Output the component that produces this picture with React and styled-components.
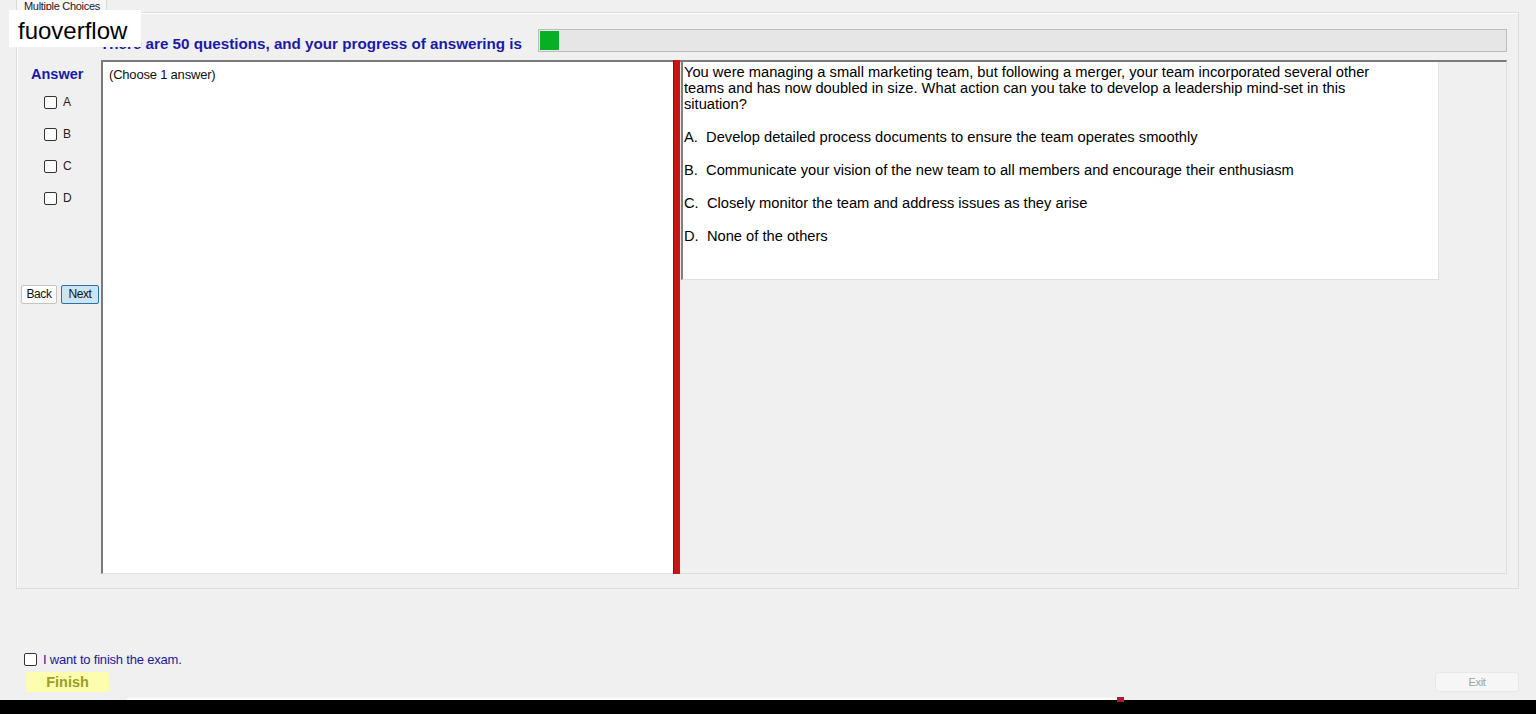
import styled, { createGlobalStyle } from "styled-components";

const GlobalStyle = createGlobalStyle`
  html, body {
    margin: 0;
    padding: 0;
    background: #f0f0f0;
    font-family: "Liberation Sans", Arial, sans-serif;
    overflow: hidden;
  }
`;

const OPTIONS = [
  "Develop detailed process documents to ensure the team operates smoothly",
  "Communicate your vision of the new team to all members and encourage their enthusiasm",
  "Closely monitor the team and address issues as they arise",
  "None of the others",
];

export default function App() {
  return (
    <>
      <GlobalStyle />
      <Page>
        <Watermark>fuoverflow</Watermark>
        <TabStrip>
          <Tab>Multiple Choices</Tab>
        </TabStrip>
        <TabPanel>
          <HeaderRow>
            <Title>There are 50 questions, and your progress of answering is</Title>
            <Progress>
              <ProgressFill style={{ width: `${(1 / 50) * 100}%` }} />
            </Progress>
          </HeaderRow>
          <Body>
            <Sidebar>
              <AnswerLabel>Answer</AnswerLabel>
              <Choices>
                {["A", "B", "C", "D"].map((l) => (
                  <Choice key={l}>
                    <Box />
                    <span>{l}</span>
                  </Choice>
                ))}
              </Choices>
              <NavRow>
                <NavButton>Back</NavButton>
                <NavButton $primary>Next</NavButton>
              </NavRow>
            </Sidebar>
            <AnswerBox>(Choose 1 answer)</AnswerBox>
            <Splitter />
            <QuestionArea>
              <QuestionBox>
                <QuestionText>
                  You were managing a small marketing team, but following a merger, your team
                  incorporated several other teams and has now doubled in size. What action can
                  you take to develop a leadership mind-set in this situation?
                </QuestionText>
                {OPTIONS.map((o, i) => (
                  <Option key={i}>
                    {"ABCD"[i]}.{"\u00a0\u00a0"}
                    {o}
                  </Option>
                ))}
              </QuestionBox>
            </QuestionArea>
          </Body>
        </TabPanel>
        <Footer>
          <FinishCheck>
            <Box />
            <span>I want to finish the exam.</span>
          </FinishCheck>
          <FooterRow>
            <FinishButton>Finish</FinishButton>
            <ExitButton>Exit</ExitButton>
          </FooterRow>
        </Footer>
        <VideoBar>
          <Track />
          <Thumb />
        </VideoBar>
      </Page>
    </>
  );
}

const Page = styled.div`
  position: relative;
  width: 1536px;
  height: 714px;
  display: flex;
  flex-direction: column;
  overflow: hidden;
`;

const Watermark = styled.div`
  position: absolute;
  left: 9px;
  top: 10px;
  width: 132px;
  height: 37px;
  background: #fff;
  font-size: 24px;
  color: #000;
  padding-left: 9px;
  box-sizing: border-box;
  line-height: 42px;
  z-index: 2;
`;

const TabStrip = styled.div`
  height: 12px;
  display: flex;
  padding-left: 16px;
`;

const Tab = styled.div`
  width: 91px;
  height: 12px;
  box-sizing: border-box;
  border: 1px solid #d9d9d9;
  border-bottom: none;
  background: #f7f7f7;
  font-size: 11px;
  letter-spacing: -0.3px;
  color: #222;
  line-height: 13px;
  padding-left: 7px;
  overflow: hidden;
  margin-top: -1px;
`;

const TabPanel = styled.div`
  margin: 0 17px 0 16px;
  height: 577px;
  box-sizing: border-box;
  border: 1px solid #dcdcdc;
  box-shadow: inset 1px 1px 0 #fff;
  display: flex;
  flex-direction: column;
`;

const HeaderRow = styled.div`
  height: 47px;
  display: flex;
  align-items: flex-start;
  padding-left: 83px;
  padding-top: 16px;
  box-sizing: border-box;
`;

const Title = styled.div`
  font-size: 15.2px;
  font-weight: bold;
  color: #1a1aa6;
  margin-top: 6px;
  width: 438px;
  white-space: nowrap;
`;

const Progress = styled.div`
  width: 969px;
  height: 23px;
  box-sizing: border-box;
  border: 1px solid #bcbcbc;
  background: #e6e6e6;
  padding: 1px;
  display: flex;
`;

const ProgressFill = styled.div`
  background: #06b025;
  height: 100%;
`;

const Body = styled.div`
  display: flex;
  height: 514px;
  padding-right: 11px;
`;

const Sidebar = styled.div`
  width: 84px;
  display: flex;
  flex-direction: column;
`;

const AnswerLabel = styled.div`
  font-size: 14.5px;
  font-weight: bold;
  color: #1a1aa6;
  margin: 6px 0 0 14px;
  height: 17px;
`;

const Choices = styled.div`
  display: flex;
  flex-direction: column;
  margin: 3px 0 0 27px;
`;

const Choice = styled.label`
  display: flex;
  align-items: center;
  gap: 6px;
  font-size: 12px;
  color: #222;
  height: 32px;
`;

const Box = styled.span`
  width: 11px;
  height: 11px;
  border: 1px solid #333;
  border-radius: 2px;
  background: #fff;
  flex-shrink: 0;
`;

const NavRow = styled.div`
  display: flex;
  gap: 4px;
  margin: 71px 0 0 4px;
`;

const NavButton = styled.div`
  height: 19px;
  box-sizing: border-box;
  padding: 0 4px;
  width: ${(p) => (p.$primary ? "38px" : "36px")};
  border: 1px solid ${(p) => (p.$primary ? "#2f6fa8" : "#c4c4c4")};
  background: ${(p) => (p.$primary ? "#cce4f7" : "#fdfdfd")};
  border-radius: 2px;
  font-size: 12px;
  letter-spacing: -0.4px;
  line-height: 17px;
  text-align: center;
  color: #111;
`;

const AnswerBox = styled.div`
  width: 572px;
  box-sizing: border-box;
  background: #fff;
  border-top: 2px solid #7a7a7a;
  border-left: 2px solid #7a7a7a;
  border-bottom: 1px solid #e3e3e3;
  font-size: 13px;
  color: #111;
  padding: 5px 6px;
  letter-spacing: -0.2px;
`;

const Splitter = styled.div`
  width: 7px;
  background: #c91414;
  border-left: 1px solid #8a1010;
  box-sizing: border-box;
`;

const QuestionArea = styled.div`
  flex: 1;
  box-sizing: border-box;
  border-top: 2px solid #7a7a7a;
  border-right: 1px solid #dcdcdc;
  border-bottom: 1px solid #dcdcdc;
  padding-left: 1px;
`;

const QuestionBox = styled.div`
  width: 758px;
  height: 218px;
  box-sizing: border-box;
  background: #fff;
  border-left: 2px solid #7f7f7f;
  border-right: 1px solid #e0e0e0;
  border-bottom: 1px solid #e0e0e0;
  padding: 2px 0 0 1px;
  font-size: 14.7px;
  color: #000;
  line-height: 16px;
`;

const QuestionText = styled.div`
  width: 700px;
  margin-bottom: 17px;
`;

const Option = styled.div`
  margin-bottom: 17px;
  white-space: pre;
`;

const Footer = styled.div`
  margin-top: 63px;
  display: flex;
  flex-direction: column;
`;

const FinishCheck = styled.div`
  display: flex;
  align-items: center;
  gap: 6px;
  margin-left: 24px;
  height: 14px;
  font-size: 13px;
  color: #1a1a9a;
  letter-spacing: -0.2px;
`;

const FooterRow = styled.div`
  display: flex;
  justify-content: space-between;
  margin: 6px 17px 0 26px;
`;

const FinishButton = styled.div`
  width: 83px;
  height: 20px;
  background: #fdfdb0;
  border-radius: 2px;
  font-size: 14.5px;
  font-weight: bold;
  color: #9c9c28;
  text-align: center;
  line-height: 21px;
`;

const ExitButton = styled.div`
  width: 84px;
  height: 20px;
  box-sizing: border-box;
  border: 1px solid #e8e8e8;
  border-radius: 3px;
  background: #f6f6f6;
  font-size: 11px;
  color: #a0a0a0;
  text-align: center;
  line-height: 18px;
  letter-spacing: -0.3px;
`;

const VideoBar = styled.div`
  position: absolute;
  left: 0;
  right: 0;
  bottom: 0;
  height: 17px;
`;

const Track = styled.div`
  position: absolute;
  left: 0;
  right: 0;
  bottom: 0;
  height: 14px;
  background: #000;
  &::before {
    content: "";
    position: absolute;
    left: 127px;
    width: 990px;
    top: -2px;
    height: 2px;
    background: #fff;
  }
`;

const Thumb = styled.div`
  position: absolute;
  left: 1117px;
  top: 0;
  width: 7px;
  height: 5px;
  background: #b0173a;
`;
